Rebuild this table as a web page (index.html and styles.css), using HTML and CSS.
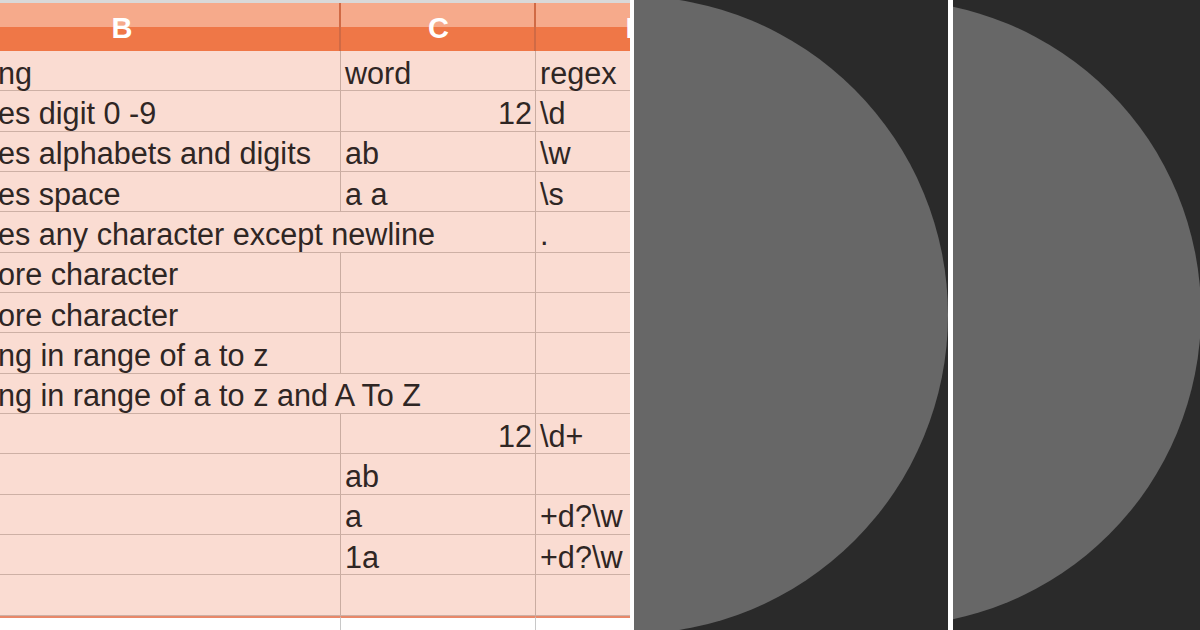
FILE: index.html
```html
<!DOCTYPE html>
<html>
<head>
<meta charset="utf-8">
<link rel="stylesheet" href="styles.css">
</head>
<body>
<div class="page">
  <div class="sheet">
    <div class="grid">
      <div class="hd">B</div><div class="hd">C</div><div class="hd">D</div>

      <div class="c b">ng</div><div class="c">word</div><div class="c">regex</div>
      <div class="c b">es digit 0 -9</div><div class="c r">12</div><div class="c">\d</div>
      <div class="c b">es alphabets and digits</div><div class="c">ab</div><div class="c">\w</div>
      <div class="c b">es space</div><div class="c">a a</div><div class="c">\s</div>
      <div class="c b span">es any character except newline</div><div class="c">.</div>
      <div class="c b">ore character</div><div class="c"></div><div class="c"></div>
      <div class="c b">ore character</div><div class="c"></div><div class="c"></div>
      <div class="c b">ng in range of a to z</div><div class="c"></div><div class="c"></div>
      <div class="c b span">ng in range of a to z and A To Z</div><div class="c"></div>
      <div class="c b"></div><div class="c r">12</div><div class="c">\d+</div>
      <div class="c b"></div><div class="c">ab</div><div class="c"></div>
      <div class="c b"></div><div class="c">a</div><div class="c">+d?\w</div>
      <div class="c b"></div><div class="c">1a</div><div class="c">+d?\w</div>
      <div class="c b"></div><div class="c"></div><div class="c"></div>

      <div class="f"></div><div class="f"></div><div class="f"></div>
    </div>
  </div>
  <div class="gap-a"></div>
  <div class="panel p1">
    <svg width="314" height="630" viewBox="0 0 314 630"><circle cx="-5" cy="315" r="319" fill="#676767"/></svg>
  </div>
  <div class="gap-b"></div>
  <div class="panel p2">
    <svg width="247" height="630" viewBox="0 0 247 630"><circle cx="-65" cy="313" r="313" fill="#676767"/></svg>
  </div>
</div>
</body>
</html>
```
FILE: styles.css
```css
html, body {
  margin: 0;
  padding: 0;
  background: #ffffff;
}

.page {
  display: flex;
  width: 1200px;
  height: 630px;
  overflow: hidden;
}

.sheet {
  flex: none;
  width: 630px;
  height: 630px;
  box-sizing: border-box;
  border-top: 3px solid #d9d9d9;
  overflow: hidden;
  background: #ffffff;
}

.grid {
  display: grid;
  width: 833px;
  height: 627px;
  margin-left: -97px;
  grid-template-columns: 438px 195px 200px;
  grid-template-rows: 48px repeat(14, 40.33px) 1fr;
  font-family: "Liberation Sans", Arial, sans-serif;
}

.hd {
  display: flex;
  align-items: center;
  justify-content: center;
  box-sizing: border-box;
  padding-top: 3px;
  padding-left: 2px;
  background: linear-gradient(#f6aa8b 0, #f6aa8b 50%, #ef7747 50%, #ef7747 100%);
  border-right: 2px solid #d06a45;
  color: #ffffff;
  font-weight: bold;
  font-size: 29px;
}

.c {
  display: flex;
  align-items: flex-end;
  box-sizing: border-box;
  padding: 0 4px 0 4px;
  background: #fadcd2;
  border-right: 1px solid #c9aca1;
  border-bottom: 1px solid #cdb0a5;
  color: #2f2624;
  font-size: 30.6px;
  line-height: 1.1;
  white-space: nowrap;
}

.b {
  padding-left: 95px;
}

.r {
  justify-content: flex-end;
  padding-right: 3px;
}

.span {
  grid-column: span 2;
}

.f {
  box-sizing: border-box;
  background: #ffffff;
  border-top: 2px solid #e8886a;
  border-right: 1px solid #c8c8c8;
}

.gap-a {
  flex: none;
  width: 4px;
  background: #ffffff;
}

.gap-b {
  flex: none;
  width: 5px;
  background: #ffffff;
}

.panel {
  height: 630px;
  background: #2a2a2a;
  overflow: hidden;
}

.panel svg {
  display: block;
}

.p1 {
  flex: none;
  width: 314px;
}

.p2 {
  flex: 1;
}
```
